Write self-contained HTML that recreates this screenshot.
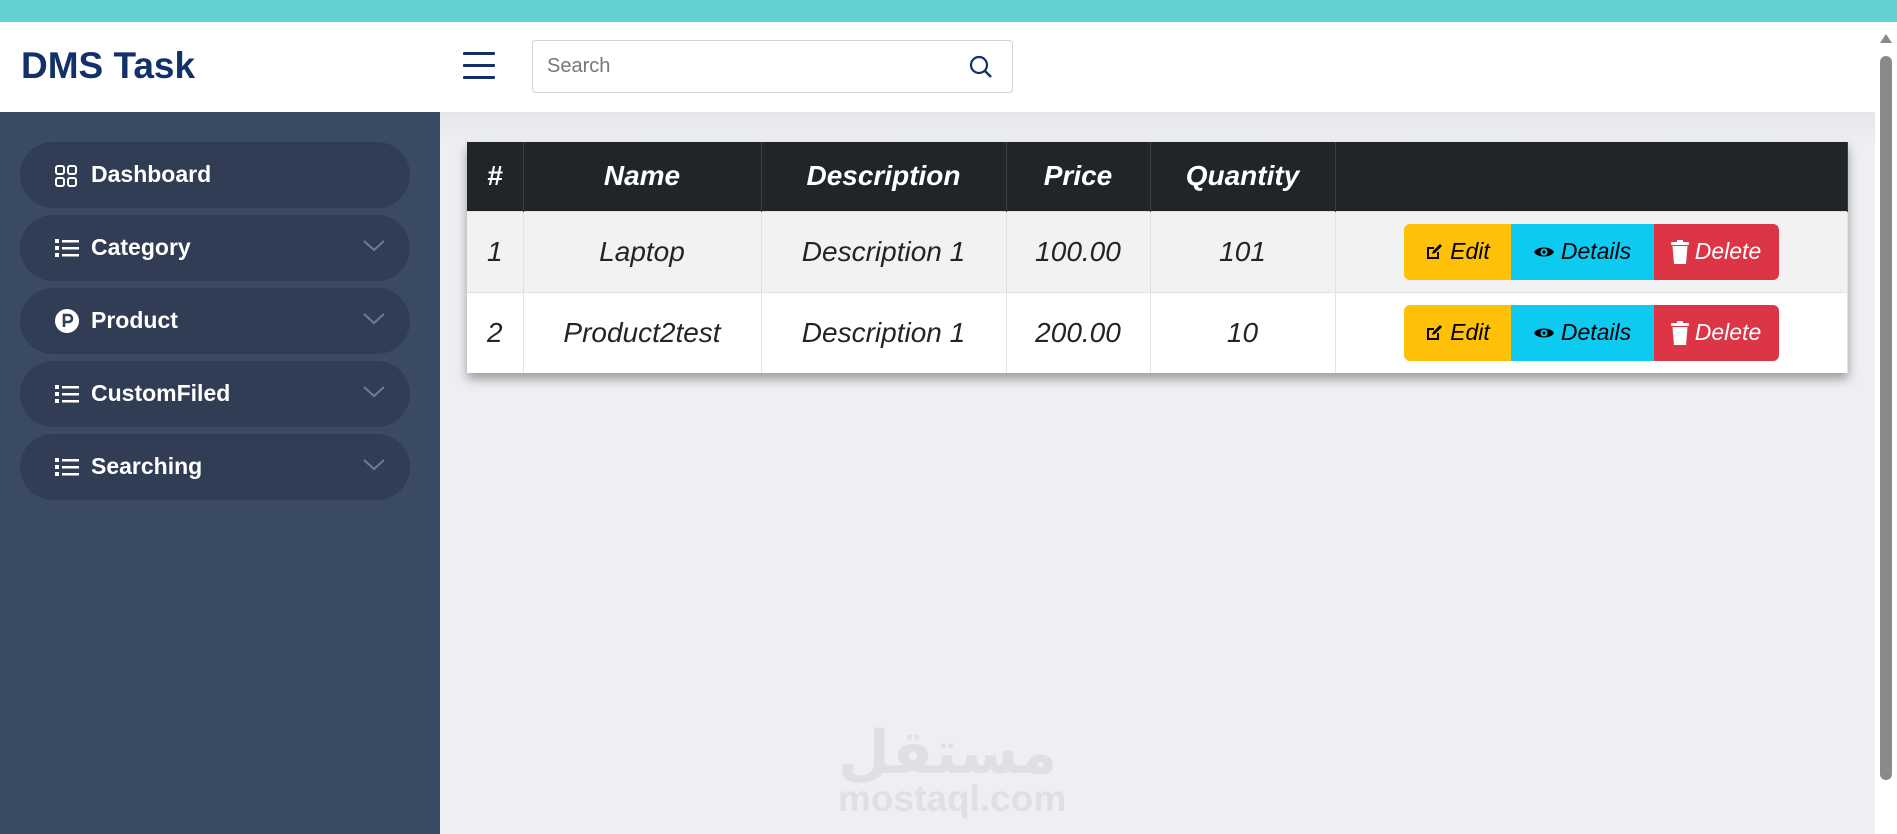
<!DOCTYPE html>
<html><head><meta charset="utf-8"><style>
*{box-sizing:border-box;margin:0;padding:0}
body{width:1897px;height:834px;overflow:hidden;position:relative;font-family:"Liberation Sans",sans-serif;background:#eeeff2}
.top{position:absolute;left:0;top:0;width:1897px;height:22px;background:#62d1d2;color:#333;font-size:14px;overflow:hidden}
.top span{position:absolute;top:-8px}
.hdr{position:absolute;left:0;top:22px;width:1875px;height:90px;background:#fff}
.logo{position:absolute;left:21px;top:23px;font-size:37px;font-weight:bold;color:#13306b}
.ham{position:absolute;left:463px;top:30px;width:32px}
.ham i{display:block;height:3px;background:#13306b;margin-bottom:9px;border-radius:1px}
.search{position:absolute;left:532px;top:18px;width:481px;height:53px;border:1px solid #cdd2da;border-radius:4px;font-size:20px;color:#777;padding:14px 0 0 14px}
.search svg{position:absolute;right:18px;top:13px}
.side{position:absolute;left:0;top:112px;width:440px;height:722px;background:#3b4a63}
.item{position:absolute;left:20px;width:390px;height:66px;border-radius:33px;background:#313c55;color:#fff;font-weight:bold;font-size:23px}
.item .t{position:absolute;left:71px;top:19px}
.item .ic{position:absolute;left:35px;top:23px}
.item .ch{position:absolute;right:25px;top:24px}
.main{position:absolute;left:440px;top:112px;width:1435px;height:722px;background:linear-gradient(#e5e6ea,#eeeff2 30px)}
.sb{position:absolute;left:1875px;top:22px;width:22px;height:812px;background:#fff}
.sb .th{position:absolute;left:5px;top:34px;width:12px;height:724px;background:#8a8a8a;border-radius:6px}
.sb .ar{position:absolute;left:5px;top:12px;width:0;height:0;border-left:6px solid transparent;border-right:6px solid transparent;border-bottom:9px solid #8a8a8a}
table{position:absolute;left:467px;top:142px;width:1381px;border-collapse:collapse;box-shadow:0 6px 10px rgba(0,0,0,.35);font-style:italic;font-size:28px;color:#212529}
th{background:#212529;color:#fff;height:69px;font-weight:bold;border-right:1px solid #3a3f44;font-size:28px}
td{height:81px;text-align:center;border-right:1px solid #dee2e6;border-top:1px solid #dee2e6}
tr.a td{background:#f2f2f2}
tr.b td{background:#fff}
.btns{display:inline-flex;height:56px;border-radius:6px;overflow:hidden;font-size:23px;margin-left:68px}
.btns div{display:flex;align-items:center;justify-content:center;gap:6px}
.e{width:107px;background:#ffc107;color:#000}
.d{width:143px;background:#0dcaf0;color:#000}
.x{width:125px;background:#dc3545;color:#fff}
.wm{position:absolute;left:838px;top:778px;font-size:37px;font-weight:bold;color:#dfe0e3}
.wa{position:absolute;left:838px;top:718px;font-size:60px;font-weight:bold;color:#dfe0e3;font-family:"DejaVu Sans",sans-serif}
</style></head><body>
<div class="top"></div>
<div class="hdr">
<div class="logo">DMS Task</div>
<div class="ham"><i></i><i></i><i></i></div>
<div class="search">Search<svg width="26" height="26" viewBox="0 0 26 26"><circle cx="11" cy="11" r="8" fill="none" stroke="#13306b" stroke-width="2.2"/><path d="M17 17l6 6" stroke="#13306b" stroke-width="2.5"/></svg></div>
</div>
<div class="side">
<div class="item" style="top:30px"><svg class="ic" width="22" height="22" viewBox="0 0 22 22" fill="none" stroke="#fff" stroke-width="2"><rect x="1" y="1" width="8" height="8" rx="2"/><rect x="13" y="1" width="8" height="8" rx="2"/><rect x="1" y="13" width="8" height="8" rx="2"/><rect x="13" y="13" width="8" height="8" rx="2"/></svg><span class="t">Dashboard</span></div>
<div class="item" style="top:103px"><svg class="ic" width="24" height="20" viewBox="0 0 24 20" fill="#fff"><rect x="0" y="1" width="4" height="4"/><rect x="0" y="8" width="4" height="4"/><rect x="0" y="15" width="4" height="4"/><rect x="7" y="2" width="17" height="2.5"/><rect x="7" y="9" width="17" height="2.5"/><rect x="7" y="16" width="17" height="2.5"/></svg><span class="t">Category</span><svg class="ch" width="22" height="14" viewBox="0 0 22 14"><path d="M1 2l10 9 10-9" fill="none" stroke="#6f7c93" stroke-width="2"/></svg></div>
<div class="item" style="top:176px"><svg class="ic" width="24" height="24" viewBox="0 0 24 24" style="top:21px"><circle cx="12" cy="12" r="12" fill="#fff"/><path d="M9 18V6h4.5a3.5 3.5 0 010 7H9" fill="none" stroke="#313c55" stroke-width="2.6"/></svg><span class="t">Product</span><svg class="ch" width="22" height="14" viewBox="0 0 22 14"><path d="M1 2l10 9 10-9" fill="none" stroke="#6f7c93" stroke-width="2"/></svg></div>
<div class="item" style="top:249px"><svg class="ic" width="24" height="20" viewBox="0 0 24 20" fill="#fff"><rect x="0" y="1" width="4" height="4"/><rect x="0" y="8" width="4" height="4"/><rect x="0" y="15" width="4" height="4"/><rect x="7" y="2" width="17" height="2.5"/><rect x="7" y="9" width="17" height="2.5"/><rect x="7" y="16" width="17" height="2.5"/></svg><span class="t">CustomFiled</span><svg class="ch" width="22" height="14" viewBox="0 0 22 14"><path d="M1 2l10 9 10-9" fill="none" stroke="#6f7c93" stroke-width="2"/></svg></div>
<div class="item" style="top:322px"><svg class="ic" width="24" height="20" viewBox="0 0 24 20" fill="#fff"><rect x="0" y="1" width="4" height="4"/><rect x="0" y="8" width="4" height="4"/><rect x="0" y="15" width="4" height="4"/><rect x="7" y="2" width="17" height="2.5"/><rect x="7" y="9" width="17" height="2.5"/><rect x="7" y="16" width="17" height="2.5"/></svg><span class="t">Searching</span><svg class="ch" width="22" height="14" viewBox="0 0 22 14"><path d="M1 2l10 9 10-9" fill="none" stroke="#6f7c93" stroke-width="2"/></svg></div>
</div>
<div class="main"></div>
<div class="wa">مستقل</div>
<div class="wm">mostaql.com</div>
<table>
<tr><th style="width:56px">#</th><th style="width:238px">Name</th><th style="width:245px">Description</th><th style="width:144px">Price</th><th style="width:185px">Quantity</th><th></th></tr>
<tr class="a"><td>1</td><td>Laptop</td><td>Description 1</td><td>100.00</td><td>101</td><td style="text-align:left"><div class="btns"><div class="e"><svg width="20" height="20" viewBox="0 0 20 20"><path d="M3 5h7v2H5v8h8v-5h2v7H3z" fill="#000"/><path d="M8 12l1-3 7-7 2 2-7 7z" fill="#000"/></svg>Edit</div><div class="d"><svg width="22" height="16" viewBox="0 0 22 16"><path d="M1 8C4 2 18 2 21 8 18 14 4 14 1 8z" fill="#000"/><circle cx="11" cy="8" r="3.5" fill="#0dcaf0"/><circle cx="11" cy="8" r="1.6" fill="#000"/></svg>Details</div><div class="x"><svg width="18" height="24" viewBox="0 0 18 24" fill="#fff"><rect x="0" y="2" width="18" height="3" rx="1"/><rect x="6" y="0" width="6" height="3"/><path d="M1.5 6h15l-1.5 18H3z"/></svg>Delete</div></div></td></tr>
<tr class="b"><td>2</td><td>Product2test</td><td>Description 1</td><td>200.00</td><td>10</td><td style="text-align:left"><div class="btns"><div class="e"><svg width="20" height="20" viewBox="0 0 20 20"><path d="M3 5h7v2H5v8h8v-5h2v7H3z" fill="#000"/><path d="M8 12l1-3 7-7 2 2-7 7z" fill="#000"/></svg>Edit</div><div class="d"><svg width="22" height="16" viewBox="0 0 22 16"><path d="M1 8C4 2 18 2 21 8 18 14 4 14 1 8z" fill="#000"/><circle cx="11" cy="8" r="3.5" fill="#0dcaf0"/><circle cx="11" cy="8" r="1.6" fill="#000"/></svg>Details</div><div class="x"><svg width="18" height="24" viewBox="0 0 18 24" fill="#fff"><rect x="0" y="2" width="18" height="3" rx="1"/><rect x="6" y="0" width="6" height="3"/><path d="M1.5 6h15l-1.5 18H3z"/></svg>Delete</div></div></td></tr>
</table>
<div class="sb"><div class="ar"></div><div class="th"></div></div>
</body></html>
